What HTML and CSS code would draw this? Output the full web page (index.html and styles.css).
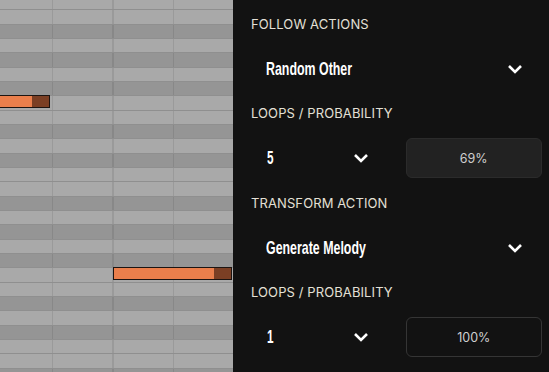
FILE: index.html
```html
<!DOCTYPE html>
<html>
<head>
<meta charset="utf-8">
<link rel="stylesheet" href="styles.css">
</head>
<body>
<div class="roll">
  <div class="rows">
    <div class="row w"></div>
    <div class="row w"></div>
    <div class="row b"></div>
    <div class="row w"></div>
    <div class="row b"></div>
    <div class="row w"></div>
    <div class="row b"></div>
    <div class="row w"><div class="note note-a"><span class="tail"></span></div></div>
    <div class="row w"></div>
    <div class="row b"></div>
    <div class="row w"></div>
    <div class="row b"></div>
    <div class="row w"></div>
    <div class="row w"></div>
    <div class="row b"></div>
    <div class="row w"></div>
    <div class="row b"></div>
    <div class="row w"></div>
    <div class="row b"></div>
    <div class="row w"><div class="note note-b"><span class="tail"></span></div></div>
    <div class="row w"></div>
    <div class="row b"></div>
    <div class="row w"></div>
    <div class="row b"></div>
    <div class="row w"></div>
    <div class="row w"></div>
    <div class="row b"></div>
  </div>
</div>
<div class="panel">
  <div class="label">FOLLOW ACTIONS</div>
  <div class="select">
    <span class="value">Random Other</span>
    <svg class="chev" width="16" height="10" viewBox="0 0 16 10"><path d="M2 2 L8 8 L14 2" /></svg>
  </div>
  <div class="label">LOOPS / PROBABILITY</div>
  <div class="pair">
    <div class="select">
      <span class="value digit">5</span>
      <svg class="chev" width="16" height="10" viewBox="0 0 16 10"><path d="M2 2 L8 8 L14 2" /></svg>
    </div>
    <div class="box filled">69%</div>
  </div>
  <div class="label">TRANSFORM ACTION</div>
  <div class="select">
    <span class="value">Generate Melody</span>
    <svg class="chev" width="16" height="10" viewBox="0 0 16 10"><path d="M2 2 L8 8 L14 2" /></svg>
  </div>
  <div class="label">LOOPS / PROBABILITY</div>
  <div class="pair">
    <div class="select">
      <span class="value digit">1</span>
      <svg class="chev" width="16" height="10" viewBox="0 0 16 10"><path d="M2 2 L8 8 L14 2" /></svg>
    </div>
    <div class="box outline">100%</div>
  </div>
</div>
</body>
</html>
```

FILE: styles.css
```css
html, body {
  margin: 0;
  padding: 0;
}
body {
  width: 549px;
  height: 372px;
  overflow: hidden;
  display: flex;
  background: #121212;
}
.roll {
  width: 233px;
  flex: none;
  overflow: hidden;
  background: #8e8e8e;
}
.rows {
  margin-top: -5px;
  display: flex;
  flex-direction: column;
}
.row {
  position: relative;
  height: 14.333px;
  box-sizing: border-box;
  border-top: 1px solid #8f8f8f;
  background-image: repeating-linear-gradient(to right, transparent 0 52px, rgba(0,0,0,0.09) 52px 53.5px, transparent 53.5px 60.5px);
}
.row.w { background-color: #a9a9a9; }
.row.b { background-color: #959595; }
.note {
  position: absolute;
  top: -1.5px;
  height: 13.7px;
  box-sizing: border-box;
  border: 1px solid #1c1411;
  background: #ea7f4c;
  display: flex;
  justify-content: flex-end;
}
.note-a { left: -4px; width: 54px; }
.note-b { left: 112.7px; width: 119px; }
.tail {
  background: #7b3f24;
  height: 100%;
}
.note-a .tail { width: 17px; }
.note-b .tail { width: 17px; }

.panel {
  flex: 1;
  padding: 14px 7px 0 18px;
  display: flex;
  flex-direction: column;
}
.label {
  height: 20px;
  line-height: 20px;
  font-family: Inter, "Noto Sans", sans-serif;
  font-size: 13px;
  letter-spacing: 0.1px;
  color: #e4e0d6;
  margin-bottom: 15px;
}
.select {
  height: 40px;
  display: flex;
  align-items: center;
  justify-content: space-between;
  padding: 0 19px 0 15px;
  box-sizing: border-box;
  margin-bottom: 15px;
}
.pair .select { margin-bottom: 0; }
.value {
  display: inline-block;
  font-family: "Liberation Sans", Arial, sans-serif;
  font-weight: bold;
  font-size: 18.5px;
  line-height: 22px;
  color: #ffffff;
  transform: scaleX(0.67);
  transform-origin: left center;
  white-space: nowrap;
  width: 0;
}
.value.digit {
  font-size: 17.5px;
  margin-left: 1px;
}
.chev path {
  fill: none;
  stroke: #ffffff;
  stroke-width: 2.6;
}
.pair {
  display: grid;
  grid-template-columns: 1fr 1fr;
  column-gap: 18px;
  height: 40px;
  margin-bottom: 15px;
}
.box {
  box-sizing: border-box;
  height: 40px;
  border-radius: 6px;
  display: flex;
  align-items: center;
  justify-content: center;
  font-family: Inter, "Noto Sans", sans-serif;
  font-size: 12.5px;
  color: #cfcfcf;
}
.box.filled {
  background: #222222;
  border: 1px solid #2b2b2b;
}
.box.outline {
  border: 1px solid #353535;
}
```
